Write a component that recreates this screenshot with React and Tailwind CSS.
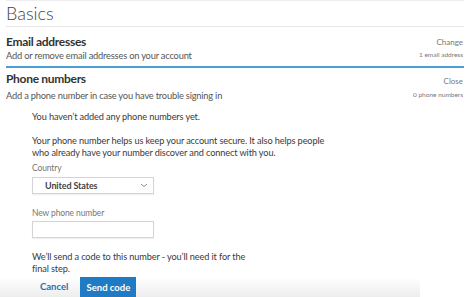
export default function App() {
  return (
    <div className="w-[474px] h-[297px] overflow-hidden bg-white text-[#333] font-['Lato',sans-serif]">
      <div className="mx-[6px] w-[458px] border-t border-[#eeeeee]">
        {/* Page title */}
        <h1 className="h-[26px] border-b border-[#e6e6e6] text-[18px] font-light leading-[24px] text-[#444]">
          Basics
        </h1>

        {/* Email */}
        <section className="flex justify-between border-b-2 border-[#4a9fd8] pt-[7px] pb-[4px]">
          <div>
            <h2 className="text-[12px] font-bold leading-[15px] tracking-[-0.3px]">Email addresses</h2>
            <p className="text-[9.3px] leading-[13px] tracking-[-0.2px] text-[#555]">Add or remove email addresses on your account</p>
          </div>
          <div className="pt-[2px] pr-[1px] text-right text-[#777]">
            <div className="text-[8px] leading-[13px]">Change</div>
            <div className="text-[6.5px] leading-[11px]">1 email address</div>
          </div>
        </section>

        {/* Phone */}
        <section className="flex justify-between pt-[3px]">
          <div>
            <h2 className="text-[12px] font-bold leading-[15px] tracking-[-0.3px]">Phone numbers</h2>
            <p className="mt-[3px] text-[9.3px] leading-[13px] tracking-[-0.2px] text-[#555]">Add a phone number in case you have trouble signing in</p>
          </div>
          <div className="pt-[4px] pr-[1px] text-right text-[#777]">
            <div className="text-[8px] leading-[13px]">Close</div>
            <div className="text-[6.5px] leading-[14px]">0 phone numbers</div>
          </div>
        </section>
      </div>

      <div className="pl-[32px] pt-[9px] text-[9.2px] leading-[12px] tracking-[-0.12px] text-[#3a3a3a]">
        <p>You haven’t added any phone numbers yet.</p>
        <p className="mt-[12px] w-[300px]">
          Your phone number helps us keep your account secure. It also helps people who already have your number discover and connect with you.
        </p>

        <label className="mt-[3px] block text-[8.5px] leading-[12px] text-[#777]">Country</label>
        <div className="mt-[3px] flex h-[17px] w-[122px] items-center justify-between border border-[#d4d4d4] pl-[12px] pr-[5px] shadow-[0_1px_1px_rgba(0,0,0,0.06)]">
          <span className="text-[9px] font-bold text-[#444]">United States</span>
          <svg width="8" height="5" viewBox="0 0 8 5" fill="none">
            <path d="M1 1l3 2.6L7 1" stroke="#888" strokeWidth="1" />
          </svg>
        </div>

        <label className="mt-[13px] block text-[8.5px] leading-[12px] text-[#777]">New phone number</label>
        <div className="mt-[2px] h-[17px] w-[122px] border border-[#d4d4d4] shadow-[0_1px_1px_rgba(0,0,0,0.06)]" />

        <p className="mt-[13px] w-[215px]">
          We’ll send a code to this number - you’ll need it for the final step.
        </p>
      </div>

      <div className="mt-[2px] flex h-[30px] w-[420px] items-start bg-gradient-to-b from-white to-[#e4e4e4] pl-[40px]">
        <span className="pt-[3px] text-[9.5px] font-bold leading-[14px] text-[#2a6fae]">Cancel</span>
        <button className="ml-[12px] h-[22px] w-[56px] bg-[#1f7bc3] text-[9.5px] font-bold text-white">
          Send code
        </button>
      </div>
    </div>
  );
}
